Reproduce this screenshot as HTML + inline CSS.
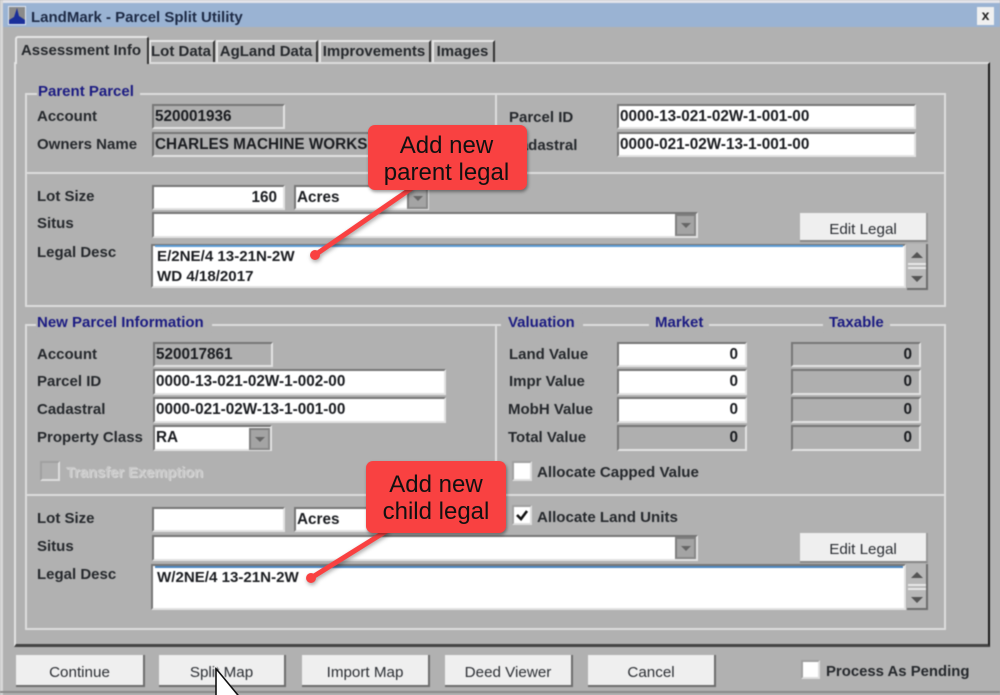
<!DOCTYPE html>
<html><head><meta charset="utf-8"><style>
html,body{margin:0;padding:0}
body{width:1000px;height:695px;overflow:hidden;position:relative;background:#b1b1b1;font-family:"Liberation Sans",sans-serif}
#w{position:absolute;left:0;top:0;width:1000px;height:695px;filter:blur(.45px)}
#w div,#w span{position:absolute;box-sizing:border-box}
.t{font-weight:bold;font-size:15px;color:#25282c;white-space:nowrap;line-height:18px;margin-top:1px}
.n{color:#1b1b82;background:#b1b1b1;padding:0 6px 0 0}
.f{background:#fff;border-top:2px solid #777;border-left:2px solid #777;border-bottom:2px solid #e2e2e2;border-right:2px solid #e2e2e2;font-weight:bold;font-size:15.3px;line-height:22px;color:#1a1c20;padding-left:1px;white-space:nowrap;overflow:hidden}
.g{background:#afafaf}
.r{text-align:right;padding:0 7px 0 0}
.l{background:#dcdcdc}
.ar{background:#a4a4a4;border:2px solid #7e7e7e;border-right-color:#888;border-bottom-color:#888}
.ar:after{content:"";position:absolute;left:4px;top:7px;border-left:5px solid transparent;border-right:5px solid transparent;border-top:5px solid #666}
.b{background:#efefef;border-bottom:2px solid #6d6d6d;border-right:2px solid #6d6d6d;text-align:center;font-size:15.2px;color:#2b2e33;line-height:35px;white-space:nowrap}
.c{background:#fff;border-top:2px solid #a0a0a0;border-left:2px solid #a0a0a0;border-bottom:2px solid #dedede;border-right:2px solid #dedede}
.tb{background:#b1b1b1;border-top:2px solid #e6e6e6;border-left:2px solid #e6e6e6;border-right:2px solid #333;padding-right:2px;font-weight:bold;font-size:15px;color:#25282c;text-align:center;white-space:nowrap;line-height:20px}
.sb{background:#d8d8d8;border-right:2px solid #6d6d6d;border-bottom:2px solid #6d6d6d}
.up,.dn{width:0;height:0;border-left:6px solid transparent;border-right:6px solid transparent}
.up{border-bottom:6px solid #555}.dn{border-top:6px solid #555}
.call{position:absolute;box-sizing:border-box;background:#f94141;border-radius:7px;box-shadow:1px 2px 3px rgba(0,0,0,.4);color:#111;font-size:24px;line-height:27px;text-align:center}
</style></head><body>
<div id="w">
<div style="left:0;top:0;width:1000px;height:3px;background:#e4e4ea"></div>
<div style="left:0;top:0;width:3px;height:695px;background:#d8d8d8"></div>
<div style="left:3px;top:3px;width:997px;height:24px;background:#9ab3d3"></div>
<div style="left:8px;top:6px;width:18px;height:19px;background:#8a8a8a;border:1px solid #dfe6f2"></div>
<svg style="position:absolute;left:9px;top:7px" width="16" height="17"><path d="M0 17V13L5 10L8 1L10 9L16 13V17Z" fill="#1a2f9a"/></svg>
<div class="t" style="left:31px;top:8px;color:#1d2a45;font-size:15px">LandMark - Parcel Split Utility</div>
<div style="left:977px;top:7px;width:17px;height:18px;background:#f0f0f0;color:#222;font:bold 14px/16px 'Liberation Sans';text-align:center">x</div>

<!-- panel -->
<div style="left:14px;top:62px;width:976px;height:585px;border-left:2px solid #e2e2e2;border-top:2px solid #dcdcdc;border-right:2px solid #1a1a1a;border-bottom:3px solid #444"></div>
<div class="tb" style="left:15px;top:36px;width:134px;height:28px;line-height:26px;border-radius:3px 3px 0 0">Assessment Info</div>
<div class="tb" style="left:149px;top:40px;width:66px;height:22px">Lot Data</div>
<div class="tb" style="left:216px;top:40px;width:102px;height:22px">AgLand Data</div>
<div class="tb" style="left:319px;top:40px;width:112px;height:22px">Improvements</div>
<div class="tb" style="left:432px;top:40px;width:63px;height:22px">Images</div>

<!-- group lines top -->
<div class="l" style="left:25px;top:93px;width:2px;height:214px"></div>
<div class="l" style="left:25px;top:93px;width:470px;height:2px"></div>
<div class="l" style="left:497px;top:93px;width:448px;height:2px"></div>
<div class="l" style="left:495px;top:93px;width:2px;height:80px"></div>
<div class="l" style="left:944px;top:93px;width:2px;height:214px"></div>
<div class="l" style="left:25px;top:172px;width:920px;height:2px"></div>
<div class="l" style="left:25px;top:305px;width:921px;height:2px"></div>
<div class="t n" style="left:37px;top:82px;padding-left:1px">Parent Parcel</div>

<!-- group lines bottom -->
<div class="l" style="left:25px;top:324px;width:470px;height:2px"></div>
<div class="l" style="left:497px;top:324px;width:449px;height:2px"></div>
<div class="l" style="left:25px;top:324px;width:2px;height:305px"></div>
<div class="l" style="left:495px;top:324px;width:2px;height:172px"></div>
<div class="l" style="left:944px;top:324px;width:2px;height:305px"></div>
<div class="l" style="left:25px;top:494px;width:920px;height:2px"></div>
<div class="l" style="left:25px;top:628px;width:921px;height:2px"></div>
<div class="t n" style="left:36px;top:313px;padding-left:1px;padding-right:8px">New Parcel Information</div>
<div class="t n" style="left:501px;top:313px;padding:0 8px 0 7px">Valuation</div>
<div class="t n" style="left:649px;top:313px;padding:0 6px">Market</div>
<div class="t n" style="left:823px;top:313px;padding:0 6px">Taxable</div>

<!-- parent -->
<div class="t" style="left:37px;top:107px">Account</div>
<div class="f g" style="left:152px;top:104px;width:133px;height:25px">520001936</div>
<div class="t" style="left:37px;top:135px">Owners Name</div>
<div class="f g" style="left:152px;top:132px;width:300px;height:25px">CHARLES MACHINE WORKS</div>
<div class="t" style="left:509px;top:108px">Parcel ID</div>
<div class="f" style="left:617px;top:104px;width:299px;height:25px">0000-13-021-02W-1-001-00</div>
<div class="t" style="left:509px;top:136px">Cadastral</div>
<div class="f" style="left:617px;top:132px;width:299px;height:25px">0000-021-02W-13-1-001-00</div>

<div class="t" style="left:37px;top:187px">Lot Size</div>
<div class="f r" style="left:152px;top:185px;width:133px;height:25px;padding-right:6px">160</div>
<div class="f" style="left:294px;top:185px;width:135px;height:25px">Acres</div>
<div class="ar" style="left:407px;top:187px;width:21px;height:22px"></div>
<div class="t" style="left:37px;top:214px">Situs</div>
<div class="f" style="left:152px;top:212px;width:546px;height:26px"></div>
<div class="ar" style="left:675px;top:214px;width:21px;height:22px"></div>
<div class="t" style="left:37px;top:243px">Legal Desc</div>
<div class="f" style="left:151px;top:244px;width:755px;height:44px"></div>
<div style="left:155px;top:245px;width:748px;height:2px;background:#5b9bd5"></div>
<div class="t" style="left:157px;top:247px;color:#1a1c20;font-size:15.1px">E/2NE/4 13-21N-2W</div>
<div class="t" style="left:157px;top:267px;color:#1a1c20;font-size:15.1px">WD 4/18/2017</div>
<div class="sb" style="left:907px;top:244px;width:21px;height:46px;background:#b8b8b8"></div>
<div class="up" style="left:911px;top:252px"></div>
<div style="left:908px;top:263px;width:18px;height:2px;background:#e8e8e8"></div>
<div style="left:908px;top:267px;width:18px;height:2px;background:#e8e8e8"></div>
<div class="dn" style="left:911px;top:276px"></div>
<div class="b" style="left:800px;top:213px;width:128px;height:29px;line-height:34px;border-bottom-color:#888;border-right-color:#999">Edit Legal</div>

<!-- new -->
<div class="t" style="left:37px;top:345px">Account</div>
<div class="f g" style="left:153px;top:342px;width:120px;height:25px">520017861</div>
<div class="t" style="left:37px;top:372px">Parcel ID</div>
<div class="f" style="left:153px;top:369px;width:293px;height:26px">0000-13-021-02W-1-002-00</div>
<div class="t" style="left:37px;top:400px">Cadastral</div>
<div class="f" style="left:153px;top:397px;width:293px;height:26px">0000-021-02W-13-1-001-00</div>
<div class="t" style="left:37px;top:428px">Property Class</div>
<div class="f" style="left:153px;top:425px;width:119px;height:26px">RA</div>
<div class="ar" style="left:249px;top:428px;width:21px;height:22px"></div>
<div class="c" style="left:40px;top:461px;width:20px;height:20px;background:#b1b1b1"></div>
<div class="t" style="left:66px;top:463px;color:#c9c9c9;text-shadow:1px 1px 0 #d8d8d8;font-size:14.7px">Transfer Exemption</div>

<div class="t" style="left:509px;top:345px">Land Value</div>
<div class="t" style="left:509px;top:372px">Impr Value</div>
<div class="t" style="left:508px;top:400px">MobH Value</div>
<div class="t" style="left:508px;top:428px">Total Value</div>
<div class="f r" style="left:617px;top:342px;width:130px;height:25px">0</div>
<div class="f r" style="left:617px;top:369px;width:130px;height:26px">0</div>
<div class="f r" style="left:617px;top:397px;width:130px;height:26px">0</div>
<div class="f g r" style="left:617px;top:425px;width:130px;height:26px">0</div>
<div class="f g r" style="left:791px;top:342px;width:130px;height:25px">0</div>
<div class="f g r" style="left:791px;top:369px;width:130px;height:26px">0</div>
<div class="f g r" style="left:791px;top:397px;width:130px;height:26px">0</div>
<div class="f g r" style="left:791px;top:425px;width:130px;height:26px">0</div>
<div class="c" style="left:512px;top:461px;width:20px;height:20px"></div>
<div class="t" style="left:537px;top:463px;font-size:15.1px">Allocate Capped Value</div>
<div class="c" style="left:512px;top:505px;width:20px;height:20px"></div>
<svg style="position:absolute;left:514px;top:508px" width="16" height="14"><path d="M3 7L7 11L13 3" fill="none" stroke="#111" stroke-width="2.6"/></svg>
<div class="t" style="left:537px;top:508px;font-size:15.1px">Allocate Land Units</div>

<div class="t" style="left:37px;top:509px">Lot Size</div>
<div class="f" style="left:152px;top:507px;width:133px;height:25px"></div>
<div class="f" style="left:294px;top:507px;width:135px;height:25px">Acres</div>
<div class="t" style="left:37px;top:537px">Situs</div>
<div class="f" style="left:152px;top:535px;width:546px;height:26px"></div>
<div class="ar" style="left:675px;top:537px;width:21px;height:22px"></div>
<div class="t" style="left:37px;top:565px">Legal Desc</div>
<div class="f" style="left:151px;top:564px;width:755px;height:46px"></div>
<div style="left:155px;top:566px;width:748px;height:2px;background:#4a86c0"></div>
<div class="t" style="left:157px;top:568px;color:#1a1c20;font-size:15.1px">W/2NE/4 13-21N-2W</div>
<div class="sb" style="left:907px;top:564px;width:21px;height:46px;background:#b8b8b8"></div>
<div class="up" style="left:911px;top:572px"></div>
<div style="left:908px;top:584px;width:18px;height:2px;background:#e8e8e8"></div>
<div style="left:908px;top:588px;width:18px;height:2px;background:#e8e8e8"></div>
<div class="dn" style="left:911px;top:597px"></div>
<div class="b" style="left:800px;top:533px;width:128px;height:30px;line-height:33px;border-bottom-color:#888;border-right-color:#999">Edit Legal</div>

<!-- bottom -->
<div class="b" style="left:16px;top:655px;width:129px;height:32px">Continue</div>
<div class="b" style="left:159px;top:655px;width:127px;height:32px">Split Map</div>
<div class="b" style="left:302px;top:655px;width:128px;height:32px">Import Map</div>
<div class="b" style="left:445px;top:655px;width:128px;height:32px">Deed Viewer</div>
<div class="b" style="left:588px;top:655px;width:128px;height:32px">Cancel</div>
<div class="c" style="left:801px;top:660px;width:19px;height:19px"></div>
<div class="t" style="left:826px;top:662px;font-size:14.9px">Process As Pending</div>
<div style="left:0;top:691px;width:1000px;height:2px;background:#8a8a8a"></div>
</div>

<!-- callouts -->
<svg style="position:absolute;left:0;top:0;filter:drop-shadow(1px 2px 2px rgba(0,0,0,.35))" width="1000" height="695">
<path d="M412 188L315 255" stroke="#f94141" stroke-width="5" fill="none"/><circle cx="315" cy="255" r="5" fill="#f94141"/>
<path d="M388 530L311 578" stroke="#f94141" stroke-width="5" fill="none"/><circle cx="311" cy="578" r="5" fill="#f94141"/>
</svg>
<div class="call" style="left:368px;top:125px;width:159px;height:65px;padding:7px 2px 0 0">Add new<br>parent legal</div>
<div class="call" style="left:366px;top:461px;width:140px;height:72px;padding-top:10px">Add new<br>child legal</div>
<svg style="position:absolute;left:0;top:0" width="1000" height="695"><path d="M216 669V700H242L218 671Z" fill="#fff" stroke="#111" stroke-width="1.6"/></svg>
</body></html>
